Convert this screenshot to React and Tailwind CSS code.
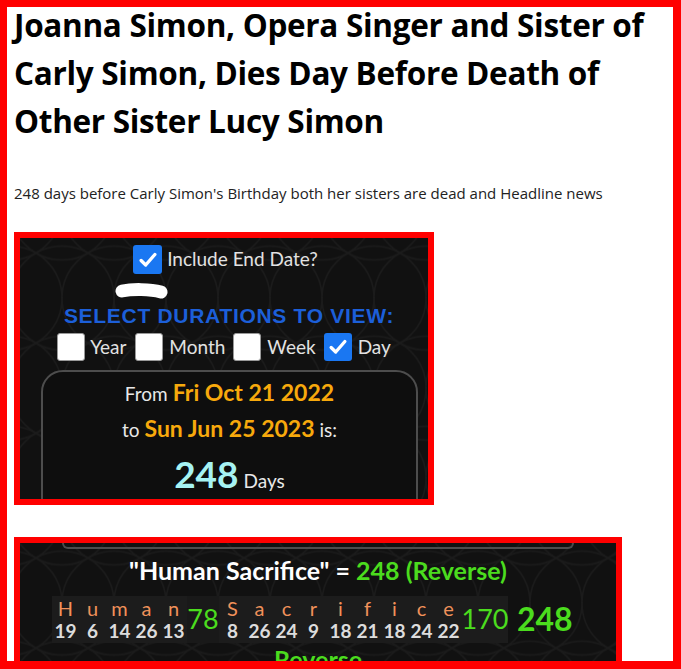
import React from "react";

// faint "flower of life" background used on the dark screenshots
function FlowerBg({ id }) {
  const r = 52;
  const h = r * Math.sqrt(3);
  return (
    <svg className="absolute inset-0 h-full w-full" aria-hidden="true">
      <defs>
        <pattern id={id} width={r} height={h} patternUnits="userSpaceOnUse" x="-10" y="-30">
          {[
            [0, 0],
            [r, 0],
            [r / 2, h / 2],
            [0, h],
            [r, h],
          ].map(([cx, cy], i) => (
            <circle key={i} cx={cx} cy={cy} r={r} fill="none" stroke="#1b1b1b" strokeWidth="1.5" />
          ))}
        </pattern>
      </defs>
      <rect width="100%" height="100%" fill={`url(#${id})`} />
    </svg>
  );
}

function Box({ checked, size = "w-[28px] h-[28px]" }) {
  if (checked) {
    return (
      <span className={`${size} flex items-center justify-center rounded-[3px] bg-[#1a77f2]`}>
        <svg viewBox="0 0 24 24" className="h-[22px] w-[22px]" fill="none" stroke="#fff" strokeWidth="3.6" strokeLinecap="round" strokeLinejoin="round">
          <path d="M4.5 12.5l5 5L19.5 6" />
        </svg>
      </span>
    );
  }
  return <span className={`${size} rounded-[3px] border border-[#999] bg-white`} />;
}

const human = [
  ["H", 19],
  ["u", 6],
  ["m", 14],
  ["a", 26],
  ["n", 13],
];
const sacrifice = [
  ["S", 8],
  ["a", 26],
  ["c", 24],
  ["r", 9],
  ["i", 18],
  ["f", 21],
  ["i", 18],
  ["c", 24],
  ["e", 22],
];

function Word({ letters }) {
  return (
    <div className="flex">
      {letters.map(([l, n], i) => (
        <div key={i} className="flex w-[27px] flex-col items-center">
          <span className="text-[20px] leading-[23px] text-[#f0915a]">{l}</span>
          <span className="text-[19px] font-bold leading-[22px] text-[#dcdcdc]">{n}</span>
        </div>
      ))}
    </div>
  );
}

export default function App() {
  return (
    <div className="h-[669px] w-[681px] overflow-hidden border-t-[7px] border-r-[8px] border-b-[8px] border-l-[7px] border-[#ff0000] bg-white pl-[7px]">
      <h1 className="-mt-[6px] pr-[8px] font-['Open_Sans',sans-serif] text-[31.5px] font-bold leading-[48px] tracking-[-0.3px] text-black">
        Joanna Simon, Opera Singer and Sister of Carly Simon, Dies Day Before Death of Other Sister Lucy Simon
      </h1>

      <p className="mt-[36px] font-['Open_Sans',sans-serif] text-[15px] leading-[24px] text-[#222]">
        248 days before Carly Simon's Birthday both her sisters are dead and Headline news
      </p>

      {/* first screenshot */}
      <div className="mt-[27px] h-[273px] w-[420px] border-[6px] border-[#ff0000]">
        <div className="relative h-full w-full overflow-hidden bg-[#111] font-['Lato',sans-serif]">
          <FlowerBg id="fl1" />
          <div className="relative">
            <div className="mt-[7px] flex items-center justify-center gap-[5px] pl-[3px]">
              <Box checked size="w-[29px] h-[29px]" />
              <span className="text-[19px] text-[#e2e2e2]">Include End Date?</span>
            </div>

            <div className="mt-[9px] h-[20px] pl-[94px]">
              <svg width="56" height="20" viewBox="0 0 56 20">
                <path d="M8 8 C 18 6, 36 6, 47 9" stroke="#fff" strokeWidth="13" strokeLinecap="round" fill="none" />
              </svg>
            </div>

            <div className="mt-[1px] pl-[10px] text-center font-['Liberation_Sans',sans-serif] text-[21px] font-bold leading-[24px] tracking-[0.7px] text-[#1c5fd9]">
              SELECT DURATIONS TO VIEW:
            </div>

            <div className="mt-[5px] flex h-[28px] items-center justify-center text-[19px] text-[#e2e2e2]">
              <Box />
              <span className="ml-[5px] mr-[9px]">Year</span>
              <Box />
              <span className="ml-[6px] mr-[8px]">Month</span>
              <Box />
              <span className="ml-[6px] mr-[8px]">Week</span>
              <Box checked />
              <span className="ml-[6px]">Day</span>
            </div>

            <div className="ml-[21px] mt-[9px] h-[150px] w-[377px] rounded-[22px] border-2 border-[#4d4d4d] bg-[#0e0e0e] pt-[2px]">
              <div className="flex h-[36px] items-baseline justify-center pt-[1px] text-[19px] text-[#e8e8e8]">
                <span>From</span>
                <span className="ml-[5px] text-[23px] font-bold text-[#f7a90c]">Fri Oct 21 2022</span>
              </div>
              <div className="flex h-[36px] items-baseline justify-center pt-[1px] text-[19px] text-[#e8e8e8]">
                <span>to</span>
                <span className="mx-[5px] text-[23px] font-bold text-[#f7a90c]">Sun Jun 25 2023</span>
                <span>is:</span>
              </div>
              <div className="flex h-[48px] items-baseline justify-center">
                <span className="text-[37px] font-bold text-[#a6f3f3]">248</span>
                <span className="ml-[5px] text-[19px] text-[#e8e8e8]">Days</span>
              </div>
            </div>
          </div>
        </div>
      </div>

      {/* second screenshot */}
      <div className="mt-[32px] h-[140px] w-[608px] border-[6px] border-b-0 border-[#ff0000]">
        <div className="relative h-full w-full overflow-hidden bg-[#111] font-['Lato',sans-serif]">
          <FlowerBg id="fl2" />
          <div className="relative">
            <div className="mx-auto h-[6px] w-[512px] rounded-b-[16px] border-x-2 border-b-2 border-[#4d4d4d]" />
            <div className="mt-[7px] text-center text-[25px] font-bold leading-[28px] text-white">
              "Human Sacrifice" = <span className="text-[#4bdc1e]">248 (Reverse)</span>
            </div>
            <div className="ml-[32px] mt-[11px] flex items-center">
              <div className="flex h-[47px] items-center bg-[#1c1c1c]">
                <Word letters={human} />
                <div className="flex h-full w-[32px] items-center justify-center bg-[#191919] text-[27px] text-[#4bdc1e]">78</div>
                <Word letters={sacrifice} />
                <div className="flex h-full w-[46px] items-center justify-center text-[27px] text-[#4bdc1e]">170</div>
              </div>
              <div className="ml-[9px] text-[32px] font-bold text-[#4bdc1e]">248</div>
            </div>
            <div className="mt-[2px] text-center text-[25px] font-bold leading-[28px] text-[#4bdc1e]">Reverse</div>
          </div>
        </div>
      </div>
    </div>
  );
}
